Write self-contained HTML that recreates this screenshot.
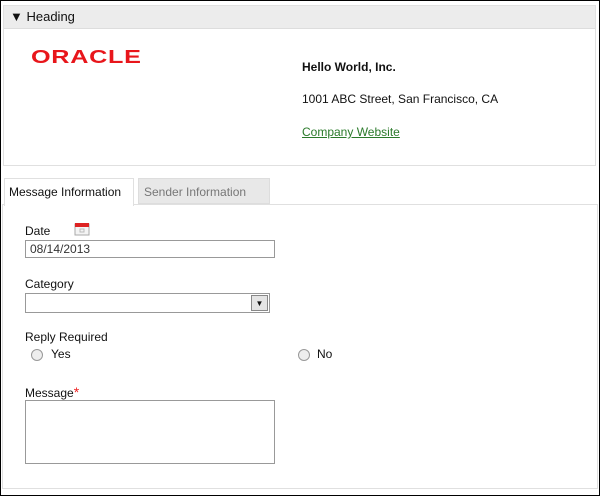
<!DOCTYPE html>
<html><head><style>
*{margin:0;padding:0;box-sizing:border-box}
body{width:600px;height:496px;position:relative;background:#fff;font-family:"Liberation Sans",sans-serif;font-size:12px;color:#111;overflow:hidden}
.a{position:absolute}
</style></head><body>
<div class="a" style="left:0;top:0;width:600px;height:496px;border:1px solid #000"></div>
<div class="a" style="left:3px;top:5px;width:593px;height:161px;border:1px solid #e0e0e0"></div>
<div class="a" style="left:4px;top:6px;width:591px;height:23px;background:#ececec;border-bottom:1px solid #ddd"></div>
<div class="a" style="left:10px;top:9px;font-size:13px">▼ Heading</div>
<div class="a" style="left:31px;top:47px;color:#e8161b;font-weight:bold;font-size:18px;letter-spacing:0.5px;transform:scaleX(1.4);transform-origin:left">ORACLE</div>
<div class="a" style="left:302px;top:60px;font-weight:bold">Hello World, Inc.</div>
<div class="a" style="left:302px;top:92px">1001 ABC Street, San Francisco, CA</div>
<div class="a" style="left:302px;top:125px;color:#2a7a2a;text-decoration:underline">Company Website</div>
<div class="a" style="left:2px;top:204px;width:596px;height:285px;border:1px solid #e0e0e0"></div>
<div class="a" style="left:4px;top:178px;width:130px;height:28px;background:#fff;border:1px solid #e0e0e0;border-bottom:none;padding:6px 0 0 4px">Message Information</div>
<div class="a" style="left:138px;top:178px;width:132px;height:26px;background:#e8e8e8;border:1px solid #ddd;padding:6px 0 0 5px;color:#777">Sender Information</div>
<div class="a" style="left:25px;top:224px">Date</div>
<svg class="a" style="left:74px;top:222px" width="16" height="14"><rect x="1" y="2" width="14" height="11" fill="#f4f4f4" stroke="#aaa"/><rect x="1" y="1" width="14" height="4" fill="#d22"/><rect x="6" y="7" width="4" height="3" fill="none" stroke="#bbb"/></svg>
<div class="a" style="left:25px;top:240px;width:250px;height:18px;border:1px solid #999;padding:1px 4px;color:#333">08/14/2013</div>
<div class="a" style="left:25px;top:277px">Category</div>
<div class="a" style="left:25px;top:293px;width:245px;height:20px;border:1px solid #999"></div>
<div class="a" style="left:251px;top:295px;width:17px;height:16px;background:#e4e4e4;border:1px solid #888;font-size:8px;text-align:center;line-height:15px">▼</div>
<div class="a" style="left:25px;top:330px">Reply Required</div>
<div class="a" style="left:31px;top:349px;width:12px;height:12px;border-radius:50%;border:1px solid #999;background:#eee"></div>
<div class="a" style="left:51px;top:347px">Yes</div>
<div class="a" style="left:298px;top:349px;width:12px;height:12px;border-radius:50%;border:1px solid #999;background:#eee"></div>
<div class="a" style="left:317px;top:347px">No</div>
<div class="a" style="left:25px;top:384px">Message<span style="color:#e22;font-size:14px">*</span></div>
<div class="a" style="left:25px;top:400px;width:250px;height:64px;border:1px solid #999"></div>
</body></html>
